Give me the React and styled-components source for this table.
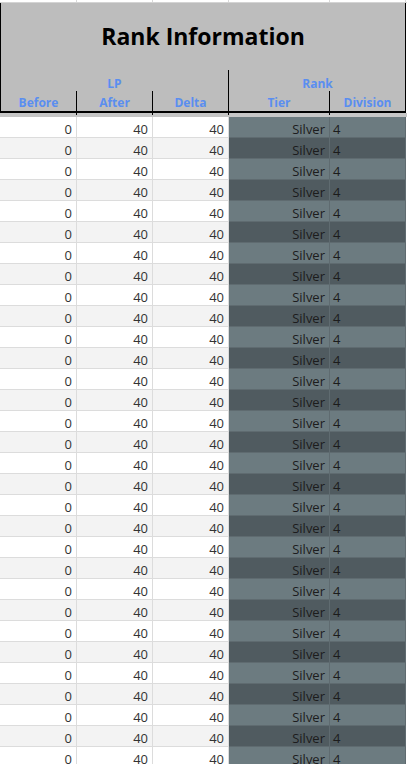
import React from "react";
import styled, { createGlobalStyle } from "styled-components";

const GlobalStyle = createGlobalStyle`
  html, body {
    margin: 0;
    padding: 0;
    background: #fff;
    overflow: hidden;
  }
`;

const COLS = "77px 76px 76px 101px 76px";

const Sheet = styled.div`
  width: 407px;
  font-family: "Open Sans", "Liberation Sans", sans-serif;
`;

const TopRow = styled.div`
  display: grid;
  grid-template-columns: ${COLS};
  height: 3px;
  border-bottom: 1px solid #d4d4d4;
  box-sizing: border-box;
`;

const TopCell = styled.div`
  border-right: 1px solid #d9d9d9;
`;

const Header = styled.div`
  width: 406px;
  box-sizing: border-box;
  background: #bdbdbd;
  border-left: 1px solid #000;
  border-right: 1px solid #000;
  border-bottom: 2px solid #000;
`;

const Title = styled.div`
  height: 67px;
  display: flex;
  align-items: center;
  justify-content: center;
  font-size: 23px;
  font-weight: 700;
  color: #000;
  padding-bottom: 2px;
  box-sizing: border-box;
`;

const GroupRow = styled.div`
  display: grid;
  grid-template-columns: 228px 177px;
  height: 21px;
`;

const SubRow = styled.div`
  display: grid;
  grid-template-columns: 76px 76px 76px 101px 75px;
  height: 20px;
`;

const Label = styled.div`
  color: #5a8ef0;
  font-size: 12px;
  font-weight: 700;
  text-align: center;
  line-height: ${(p) => (p.group ? "28px" : "24px")};
  border-right: ${(p) => (p.divider ? "1px solid #000" : "none")};
  box-sizing: border-box;
  height: 100%;
`;

const Freeze = styled.div`
  height: 4px;
  background: #c6c6c6;
`;

const Row = styled.div`
  display: grid;
  grid-template-columns: ${COLS};
  height: 21px;
`;

const Cell = styled.div`
  box-sizing: border-box;
  border-right: 1px solid ${(p) => (p.slate ? "#5f6b70" : "#dcdcdc")};
  border-bottom: 1px solid ${(p) => (p.slate ? "#5f6b70" : "#dcdcdc")};
  background: ${(p) =>
    p.slate ? (p.alt ? "#505b60" : "#6c7b80") : p.alt ? "#f3f3f3" : "#fff"};
  color: ${(p) => (p.slate ? "#1c1c1c" : "#333")};
  font-size: 13px;
  line-height: 24px;
  text-align: ${(p) => (p.left ? "left" : "right")};
  padding: 0 4px 0 3px;
  white-space: nowrap;
  overflow: hidden;
`;

const rows = Array.from({ length: 31 }, () => ({
  before: 0,
  after: 40,
  delta: 40,
  tier: "Silver",
  division: 4,
}));

export default function App() {
  return (
    <Sheet>
      <GlobalStyle />
      <TopRow>
        <TopCell />
        <TopCell />
        <TopCell />
        <TopCell />
        <TopCell />
      </TopRow>
      <Header>
        <Title>Rank Information</Title>
        <GroupRow>
          <Label group divider>LP</Label>
          <Label group>Rank</Label>
        </GroupRow>
        <SubRow>
          <Label divider>Before</Label>
          <Label divider>After</Label>
          <Label divider>Delta</Label>
          <Label divider>Tier</Label>
          <Label>Division</Label>
        </SubRow>
      </Header>
      <Freeze />
      {rows.map((r, i) => {
        const alt = i % 2 === 1;
        return (
          <Row key={i}>
            <Cell alt={alt}>{r.before}</Cell>
            <Cell alt={alt}>{r.after}</Cell>
            <Cell alt={alt}>{r.delta}</Cell>
            <Cell slate alt={alt}>{r.tier}</Cell>
            <Cell slate alt={alt} left>{r.division}</Cell>
          </Row>
        );
      })}
    </Sheet>
  );
}
